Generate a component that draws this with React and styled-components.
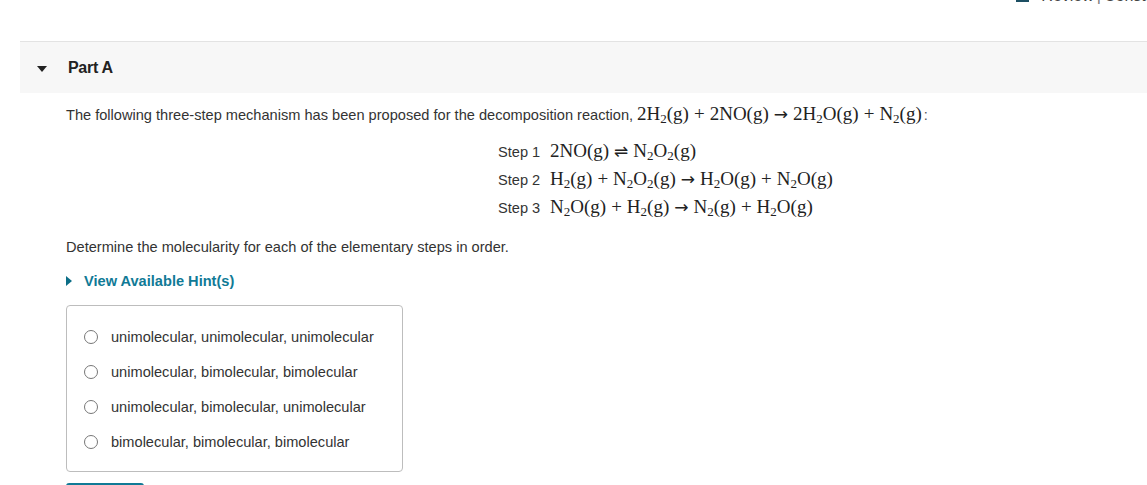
import React from 'react';
import styled, { createGlobalStyle } from 'styled-components';

const GlobalStyle = createGlobalStyle`
  html, body {
    margin: 0;
    padding: 0;
    background: #fff;
    overflow: hidden;
  }
  body {
    font-family: Arial, "Liberation Sans", sans-serif;
    color: #333;
  }
`;

const Page = styled.div`
  width: 1147px;
  height: 485px;
  overflow: hidden;
  position: relative;
`;

const TopBar = styled.div`
  height: 41px;
  display: flex;
  justify-content: flex-end;
  align-items: flex-start;
`;

const TopLinks = styled.div`
  display: flex;
  align-items: center;
  gap: 3px;
  margin-top: -13px;
  margin-right: -29px;
  font-size: 16px;
  color: #444;
  white-space: nowrap;
`;

const BookIcon = styled.span`
  display: inline-block;
  width: 13px;
  height: 12px;
  background: #1d4f63;
  margin-right: 9px;
`;

const Sep = styled.span`
  color: #777;
`;

const PartHeader = styled.div`
  margin-left: 20px;
  height: 51px;
  border-top: 1px solid #e3e3e3;
  background: #f7f7f7;
  display: flex;
  align-items: center;
  padding-left: 17px;
`;

const Caret = styled.span`
  width: 0;
  height: 0;
  border-left: 5px solid transparent;
  border-right: 5px solid transparent;
  border-top: 6px solid #222;
  margin-right: 21px;
  margin-top: 2px;
`;

const PartTitle = styled.div`
  font-weight: bold;
  font-size: 16px;
  color: #222;
  letter-spacing: -0.3px;
`;

const Content = styled.div`
  padding-left: 66px;
  padding-top: 11px;
`;

const Para = styled.div`
  font-size: 14.6px;
  color: #333;
  line-height: 20px;
  display: flex;
  align-items: baseline;
  white-space: nowrap;
`;

const Math = styled.span`
  font-family: "Liberation Serif", "DejaVu Serif", serif;
  font-size: 19px;
  color: #222;
  white-space: nowrap;
  margin-left: ${p => p.$ml || 0}px;

  sub {
    font-size: 13px;
    vertical-align: -3px;
    line-height: 0;
  }
`;

const Op = styled.span`
  margin: 0 5px;
`;

const Arrow = styled.span`
  font-family: "DejaVu Sans", sans-serif;
  font-size: 17px;
  margin: 0 5px;
`;

const Colon = styled.span`
  margin-left: 2px;
  font-size: 14.6px;
  color: #555;
`;

const Steps = styled.div`
  padding-left: 432px;
  margin-top: 12px;
  display: flex;
  flex-direction: column;
`;

const StepRow = styled.div`
  display: flex;
  align-items: baseline;
  height: 28px;
  line-height: 28px;
`;

const StepLabel = styled.span`
  font-size: 14.6px;
  color: #333;
  width: 52px;
`;

const Question = styled(Para)`
  margin-top: 16px;
`;

const Hint = styled.div`
  margin-top: 14px;
  display: flex;
  align-items: center;
  font-size: 14.6px;
  font-weight: bold;
  color: #107a96;
  height: 20px;
`;

const HintArrow = styled.span`
  width: 0;
  height: 0;
  border-top: 5px solid transparent;
  border-bottom: 5px solid transparent;
  border-left: 6px solid #0c6e87;
  margin-right: 12px;
`;

const OptionBox = styled.div`
  margin-top: 14px;
  width: 337px;
  height: 167px;
  border: 1px solid #bdbdbd;
  border-radius: 4px;
  box-sizing: border-box;
  padding: 13px 0 0 17px;
  display: flex;
  flex-direction: column;
`;

const Option = styled.label`
  display: flex;
  align-items: center;
  height: 35px;
  font-size: 14.6px;
  color: #333;
`;

const Radio = styled.span`
  width: 12px;
  height: 12px;
  border: 1px solid #777;
  border-radius: 50%;
  margin-right: 13px;
  flex-shrink: 0;
`;

const SubmitBar = styled.div`
  margin-top: 11px;
  width: 78px;
  height: 8px;
  background: #107a96;
  border-radius: 3px 3px 0 0;
`;

const options = [
  'unimolecular, unimolecular, unimolecular',
  'unimolecular, bimolecular, bimolecular',
  'unimolecular, bimolecular, unimolecular',
  'bimolecular, bimolecular, bimolecular',
];

const App = () => {
  return (
    <Page>
      <GlobalStyle />
      <TopBar>
        <TopLinks>
          <BookIcon />
          <span>Review</span>
          <Sep>|</Sep>
          <span>Constants</span>
        </TopLinks>
      </TopBar>

      <PartHeader>
        <Caret />
        <PartTitle>Part A</PartTitle>
      </PartHeader>

      <Content>
        <Para>
          The following three-step mechanism has been proposed for the decomposition reaction,
          <Math $ml={4}>
            2H<sub>2</sub>(g)<Op>+</Op>2NO(g)<Arrow>→</Arrow>2H<sub>2</sub>O(g)<Op>+</Op>N<sub>2</sub>(g)
          </Math>
          <Colon>:</Colon>
        </Para>

        <Steps>
          <StepRow>
            <StepLabel>Step 1</StepLabel>
            <Math>
              2NO(g)<Arrow>⇌</Arrow>N<sub>2</sub>O<sub>2</sub>(g)
            </Math>
          </StepRow>
          <StepRow>
            <StepLabel>Step 2</StepLabel>
            <Math>
              H<sub>2</sub>(g)<Op>+</Op>N<sub>2</sub>O<sub>2</sub>(g)<Arrow>→</Arrow>H<sub>2</sub>O(g)<Op>+</Op>N<sub>2</sub>O(g)
            </Math>
          </StepRow>
          <StepRow>
            <StepLabel>Step 3</StepLabel>
            <Math>
              N<sub>2</sub>O(g)<Op>+</Op>H<sub>2</sub>(g)<Arrow>→</Arrow>N<sub>2</sub>(g)<Op>+</Op>H<sub>2</sub>O(g)
            </Math>
          </StepRow>
        </Steps>

        <Question>Determine the molecularity for each of the elementary steps in order.</Question>

        <Hint>
          <HintArrow />
          View Available Hint(s)
        </Hint>

        <OptionBox>
          {options.map((text, i) => (
            <Option key={i}>
              <Radio />
              {text}
            </Option>
          ))}
        </OptionBox>

        <SubmitBar />
      </Content>
    </Page>
  );
};

export default App;
